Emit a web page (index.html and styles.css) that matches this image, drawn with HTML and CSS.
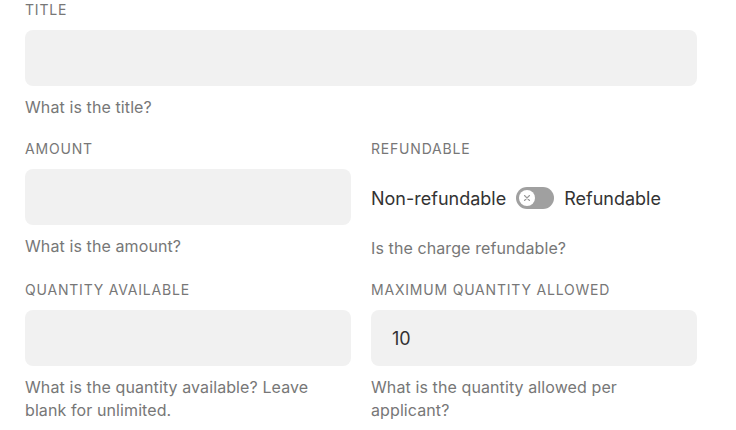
FILE: index.html
```html
<!DOCTYPE html>
<html lang="en">
<head>
<meta charset="utf-8">
<title>Charge form</title>
<link rel="stylesheet" href="styles.css">
</head>
<body>
<form class="form">
  <div class="field full">
    <label class="label">Title</label>
    <input class="input" type="text" value="">
    <p class="help">What is the title?</p>
  </div>

  <div class="field">
    <label class="label">Amount</label>
    <input class="input" type="text" value="">
    <p class="help">What is the amount?</p>
  </div>

  <div class="field">
    <label class="label">Refundable</label>
    <div class="toggle-row">
      <span class="toggle-text">Non-refundable</span>
      <span class="switch">
        <span class="knob">
          <svg width="8" height="8" viewBox="0 0 8 8" aria-hidden="true"><path d="M1.5 1.5 L6.5 6.5 M6.5 1.5 L1.5 6.5" stroke="#9a9a9a" stroke-width="1.1" stroke-linecap="round"/></svg>
        </span>
      </span>
      <span class="toggle-text">Refundable</span>
    </div>
    <p class="help">Is the charge refundable?</p>
  </div>

  <div class="field">
    <label class="label">Quantity available</label>
    <input class="input" type="text" value="">
    <p class="help">What is the quantity available? Leave blank for unlimited.</p>
  </div>

  <div class="field">
    <label class="label">Maximum quantity allowed</label>
    <input class="input" type="text" value="10">
    <p class="help">What is the quantity allowed per applicant?</p>
  </div>
</form>
</body>
</html>
```

FILE: styles.css
```css
* { box-sizing: border-box; }

html, body {
  margin: 0;
  padding: 0;
  background: #ffffff;
}

body {
  font-family: "Inter", "Noto Sans", sans-serif;
  color: #333333;
}

.form {
  display: grid;
  grid-template-columns: 326px 326px;
  column-gap: 20px;
  row-gap: 20px;
  padding: 0 0 0 25px;
  align-items: start;
}

.field {
  display: flex;
  flex-direction: column;
}

.field.full {
  grid-column: 1 / span 2;
}

.label {
  display: block;
  font-size: 14px;
  line-height: 20px;
  letter-spacing: 0.8px;
  text-transform: uppercase;
  color: #777777;
  margin-bottom: 10px;
}

.input {
  display: block;
  width: 100%;
  height: 56px;
  border: none;
  outline: none;
  border-radius: 8px;
  background: #f1f1f1;
  padding: 0 21px;
  font-family: inherit;
  font-size: 18px;
  color: #333333;
}

.help {
  margin: 10px 0 0 0;
  padding-right: 6px;
  font-size: 16px;
  line-height: 23px;
  letter-spacing: 0.1px;
  color: #777777;
}

.toggle-row {
  height: 58px;
  display: flex;
  align-items: center;
  gap: 10px;
}

.toggle-text {
  font-size: 18px;
  color: #333333;
}

.switch {
  width: 38px;
  height: 22px;
  border-radius: 11px;
  background: #a0a0a0;
  display: flex;
  align-items: center;
  padding: 0 3px;
}

.knob {
  width: 16px;
  height: 16px;
  border-radius: 50%;
  background: #ffffff;
  display: flex;
  align-items: center;
  justify-content: center;
}
```
